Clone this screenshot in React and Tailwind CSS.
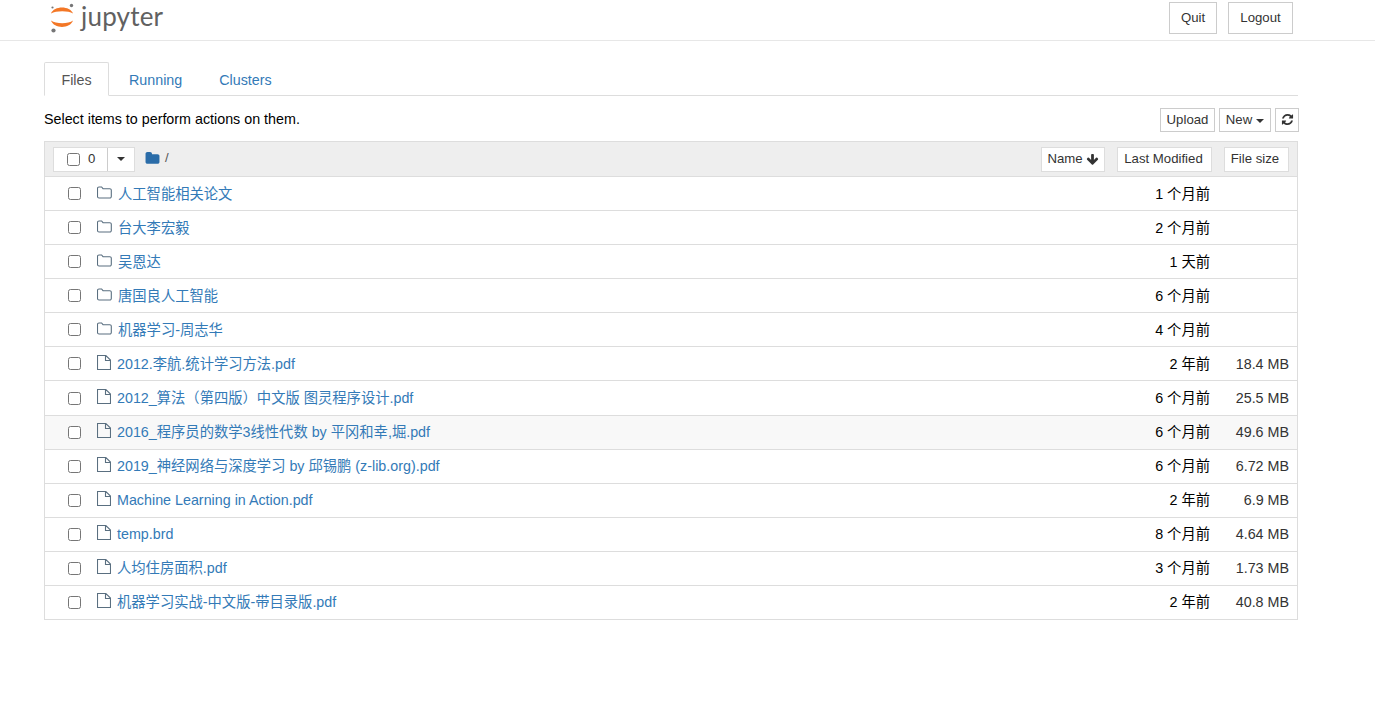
const items = [
  { type: 'folder', name: '人工智能相关论文', date: '1 个月前' },
  { type: 'folder', name: '台大李宏毅', date: '2 个月前' },
  { type: 'folder', name: '吴恩达', date: '1 天前' },
  { type: 'folder', name: '唐国良人工智能', date: '6 个月前' },
  { type: 'folder', name: '机器学习-周志华', date: '4 个月前' },
  { type: 'file', name: '2012.李航.统计学习方法.pdf', date: '2 年前', size: '18.4 MB' },
  { type: 'file', name: '2012_算法（第四版）中文版 图灵程序设计.pdf', date: '6 个月前', size: '25.5 MB' },
  { type: 'file', name: '2016_程序员的数学3线性代数 by 平冈和幸,堀.pdf', date: '6 个月前', size: '49.6 MB', hover: true },
  { type: 'file', name: '2019_神经网络与深度学习 by 邱锡鹏 (z-lib.org).pdf', date: '6 个月前', size: '6.72 MB' },
  { type: 'file', name: 'Machine Learning in Action.pdf', date: '2 年前', size: '6.9 MB' },
  { type: 'file', name: 'temp.brd', date: '8 个月前', size: '4.64 MB' },
  { type: 'file', name: '人均住房面积.pdf', date: '3 个月前', size: '1.73 MB' },
  { type: 'file', name: '机器学习实战-中文版-带目录版.pdf', date: '2 年前', size: '40.8 MB' },
];

function JupyterLogo() {
  return (
    <svg width="26" height="32" viewBox="0 0 26 32" className="shrink-0">
      <path d="M1 12.5C4 4.5 20 4.5 23 12.5C18.5 9.5 6 9.5 1 12.5Z" fill="#f37726" />
      <path d="M1 19.5C4 28 20 28 23 19.5C18.5 23 6 23 1 19.5Z" fill="#f37726" />
      <circle cx="21.5" cy="4.5" r="1.7" fill="#767677" />
      <circle cx="2.5" cy="6.5" r="1.1" fill="#767677" />
      <circle cx="3.5" cy="29.5" r="2.1" fill="#767677" />
    </svg>
  );
}

function FolderOutline() {
  return (
    <svg width="15" height="13" viewBox="0 0 15 13" fill="none" className="shrink-0 -mt-[2px]">
      <path d="M.5 2.5a1.5 1.5 0 0 1 1.5-1.5h2.6l1.4 1.7h6.8a1.5 1.5 0 0 1 1.5 1.5v6.3a1.5 1.5 0 0 1-1.5 1.5H2a1.5 1.5 0 0 1-1.5-1.5z" stroke="#5a6f80" strokeWidth="1.1" />
    </svg>
  );
}

function FileOutline() {
  return (
    <svg width="14" height="15" viewBox="0 0 14 15" fill="none" className="shrink-0 -mt-[3px]">
      <path d="M.5.5h8.3l4.7 4.5v9.5H.5zM8.5 .5v5h5" stroke="#5a6f80" strokeWidth="1.1" />
    </svg>
  );
}

function RefreshIcon() {
  return (
    <svg viewBox="0 0 1792 1792" className="w-[13px] h-[13px] -mt-px" fill="#333">
      <path d="M1639 1056q0 5-1 7-64 268-268 434.5t-478 166.5q-146 0-282.5-55t-243.5-157l-129 129q-19 19-45 19t-45-19-19-45v-448q0-26 19-45t45-19h448q26 0 45 19t19 45-19 45l-137 137q71 66 161 102t187 36q134 0 250-65t186-179q11-17 53-117 8-23 30-23h192q13 0 22.5 9.5t9.5 22.5zm25-800v448q0 26-19 45t-45 19h-448q-26 0-45-19t-19-45 19-45l138-138q-148-137-349-137-134 0-250 65t-186 179q-11 17-53 117-8 23-30 23h-199q-13 0-22.5-9.5t-9.5-22.5v-7q65-268 270-434.5t480-166.5q146 0 284 55.5t245 156.5l130-129q19-19 45-19t45 19 19 45z" />
    </svg>
  );
}

function ArrowDownIcon() {
  return (
    <svg viewBox="0 0 1792 1792" className="w-[13px] h-[13px]" fill="#333">
      <path d="M1675 832q0 53-37 90l-651 652q-39 37-91 37-53 0-90-37l-651-652q-38-36-38-90 0-53 38-91l74-75q39-37 91-37 53 0 90 37l294 294v-704q0-52 38-90t90-38h128q52 0 90 38t38 90v704l294-294q37-37 90-37 52 0 91 37l75 75q37 39 37 91z" />
    </svg>
  );
}

function FolderIcon() {
  return (
    <svg viewBox="0 0 1792 1792" className="w-[15px] h-[15px] ml-[10px] -mt-[2px]" fill="#2a6ca8">
      <path d="M1728 608v704q0 92-66 158t-158 66h-1216q-92 0-158-66t-66-158v-960q0-92 66-158t158-66h320q92 0 158 66t66 158v32h672q92 0 158 66t66 158z" />
    </svg>
  );
}

function Row({ item }) {
  const isFolder = item.type === 'folder';
  return (
    <div className={`flex items-center h-[34.08px] border-b border-[#ddd] ${item.hover ? 'bg-[#f8f8f8]' : ''}`}>
      <input type="checkbox" className="ml-[23px] w-[13px] h-[13px]" />
      <div className="ml-4 w-[21px]">{isFolder ? <FolderOutline /> : <FileOutline />}</div>
      <a className={`text-[#337ab7] whitespace-nowrap ${isFolder ? '' : '-ml-px'}`}>{item.name}</a>
      <span className="ml-auto text-black">{item.date}</span>
      <span className="w-[87px] text-right pr-[8px] text-[#333]">{item.size}</span>
    </div>
  );
}

export default function App() {
  return (
    <div className="min-h-[728px] bg-white text-[14.3px] leading-5 text-[#333] font-['Liberation_Sans','Noto_Sans_CJK_SC',sans-serif]">
      {/* Header */}
      <div className="flex items-start h-[41px] border-b border-[#e7e7e7]">
        <div className="flex items-center ml-[50px] h-[34px] gap-[5px]">
          <JupyterLogo />
          <span className="font-['Lato',sans-serif] text-[26px] leading-[30px] -mt-[3px] text-[#616161] tracking-[0.2px]">jupyter</span>
        </div>
        <div className="ml-auto mt-[2px] mr-[82px] flex gap-[11px]">
          <button className="h-[32px] w-[48px] pb-px border border-[#ccc] bg-white text-[#333] text-[13.2px]">Quit</button>
          <button className="h-[32px] w-[65px] pb-px border border-[#ccc] bg-white text-[#333] text-[13.2px]">Logout</button>
        </div>
      </div>

      <div className="ml-[44px] w-[1254px]">
        {/* Tabs */}
        <div className="flex mt-[21px] h-[34px] border-b border-[#ddd]">
          <div className="h-[34px] w-[65px] pt-[2px] flex items-center justify-center bg-white border border-[#ddd] border-b-white rounded-t-[2px] text-[#555]">Files</div>
          <div className="h-[34px] pt-px ml-[20px] flex items-center text-[#337ab7]">Running</div>
          <div className="h-[34px] pt-px ml-[37px] flex items-center text-[#337ab7]">Clusters</div>
        </div>

        {/* Toolbar */}
        <div className="flex items-center mt-[12px] h-[24px]">
          <span className="text-black -mt-[2px]">Select items to perform actions on them.</span>
          <div className="ml-auto -mr-px flex gap-1 text-[13.2px]">
            <button className="h-[24px] w-[55px] pb-px border border-[#ccc] bg-white text-[#333]">Upload</button>
            <button className="h-[24px] w-[52px] pb-px border border-[#ccc] bg-white text-[#333] flex items-center justify-center gap-1">
              New
              <span className="w-0 h-0 mt-[2px] border-x-[4.5px] border-t-[4.5px] border-x-transparent border-t-[#333]" />
            </button>
            <button className="h-[24px] w-[24px] border border-[#ccc] bg-white text-[#333] flex items-center justify-center">
              <RefreshIcon />
            </button>
          </div>
        </div>

        {/* File list */}
        <div className="mt-[9px] border border-b-0 border-[#ddd]">
          <div className="flex items-center h-[35px] bg-[#eee] border-b border-[#ddd]">
            <div className="flex ml-2 h-[25px] border border-[#ddd] bg-white">
              <div className="w-[54px] flex items-center border-r border-[#ccc] pl-[13px] gap-[8px]">
                <input type="checkbox" className="w-[13px] h-[13px]" />
                <span className="text-[13.2px] text-[#333]">0</span>
              </div>
              <div className="w-[26px] flex items-center justify-center">
                <span className="w-0 h-0 border-x-[4.5px] border-t-[4.5px] border-x-transparent border-t-[#333]" />
              </div>
            </div>
            <FolderIcon />
            <span className="ml-[5px] -mt-[2px] text-[13.2px] text-[#555]">/</span>
            <div className="ml-auto flex items-center text-[13.2px] mr-[8px]">
              <button className="h-[25px] w-[64px] border border-[#ddd] bg-white text-[#333] flex items-center justify-center gap-[3px]">
                Name
                <ArrowDownIcon />
              </button>
              <button className="ml-3 h-[25px] w-[95px] pr-[2px] border border-[#ddd] bg-white text-[#333]">Last Modified</button>
              <button className="ml-3 h-[25px] w-[65px] pr-[3px] border border-[#ddd] bg-white text-[#333]">File size</button>
            </div>
          </div>
          {items.map((item) => (
            <Row key={item.name} item={item} />
          ))}
        </div>
      </div>
    </div>
  );
}
